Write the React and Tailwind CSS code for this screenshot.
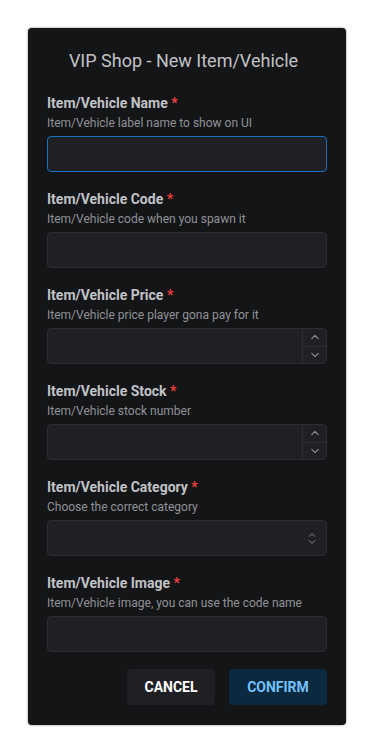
import { useState } from "react";

const fields = [
  { label: "Item/Vehicle Name", desc: "Item/Vehicle label name to show on UI", type: "text", focus: true },
  { label: "Item/Vehicle Code", desc: "Item/Vehicle code when you spawn it", type: "text" },
  { label: "Item/Vehicle Price", desc: "Item/Vehicle price player gona pay for it", type: "number" },
  { label: "Item/Vehicle Stock", desc: "Item/Vehicle stock number", type: "number" },
  { label: "Item/Vehicle Category", desc: "Choose the correct category", type: "select" },
  { label: "Item/Vehicle Image", desc: "Item/Vehicle image, you can use the code name", type: "text" },
];

function Chevron({ up, size = 10 }) {
  return (
    <svg width={size} height={size} viewBox="0 0 15 15" fill="none">
      <path
        d={up ? "M3.5 9.5L7.5 5.5L11.5 9.5" : "M3.5 5.5L7.5 9.5L11.5 5.5"}
        stroke="#909296"
        strokeWidth="1.4"
        strokeLinecap="round"
        strokeLinejoin="round"
      />
    </svg>
  );
}

function Field({ field }) {
  const [value, setValue] = useState("");
  const border = field.focus ? "border-[#1971c2]" : "border-[#2c2e33]";

  return (
    <div className="flex flex-col">
      <p className="h-[22px] leading-[22px] text-[14px] font-bold text-[#c1c2c5]">
        {field.label} <span className="text-[#f03e3e]">*</span>
      </p>
      <p className="h-[18px] leading-[18px] text-[12px] text-[#909296]">{field.desc}</p>
      <div className={`mt-[4px] h-[36px] flex rounded-[4px] border bg-[#1f2024] ${border} overflow-hidden`}>
        <input
          value={value}
          onChange={(e) => setValue(e.target.value)}
          className="flex-1 min-w-0 bg-transparent px-3 text-[14px] text-[#c1c2c5] outline-none"
        />
        {field.type === "number" && (
          <div className="w-[24px] flex flex-col border-l border-[#2c2e33]">
            <div className="flex-1 flex items-center justify-center border-b border-[#2c2e33]">
              <Chevron up size={12} />
            </div>
            <div className="flex-1 flex items-center justify-center">
              <Chevron size={12} />
            </div>
          </div>
        )}
        {field.type === "select" && (
          <div className="w-[28px] flex flex-col items-center justify-center -space-y-[3px]">
            <Chevron up />
            <Chevron />
          </div>
        )}
      </div>
    </div>
  );
}

function App() {
  return (
    <div className="w-full min-h-screen bg-white pt-[28px]" style={{ fontFamily: "Roboto, 'Noto Sans', sans-serif" }}>
      <div className="mx-auto w-[318px] bg-[#141517] rounded-[4px] shadow-[0_0_2px_rgba(0,0,0,0.6)] px-[19px] pt-[19px] pb-[20px]">
        <h1 className="h-[28px] leading-[28px] text-center pr-[7px] text-[18px] text-[#c1c2c5]">
          VIP Shop - New Item/Vehicle
        </h1>
        <div className="mt-[17px] flex flex-col gap-[16px]">
          {fields.map((f) => (
            <Field key={f.label} field={f} />
          ))}
        </div>
        <div className="mt-[17px] flex justify-end gap-[14px]">
          <button className="h-[36px] w-[88px] rounded-[4px] bg-[#1f2024] text-[14px] font-bold text-white">
            CANCEL
          </button>
          <button className="h-[36px] w-[98px] rounded-[4px] bg-[#0b2a3f] text-[14px] font-bold text-[#74c0fc]">
            CONFIRM
          </button>
        </div>
      </div>
    </div>
  );
}

export default App;
